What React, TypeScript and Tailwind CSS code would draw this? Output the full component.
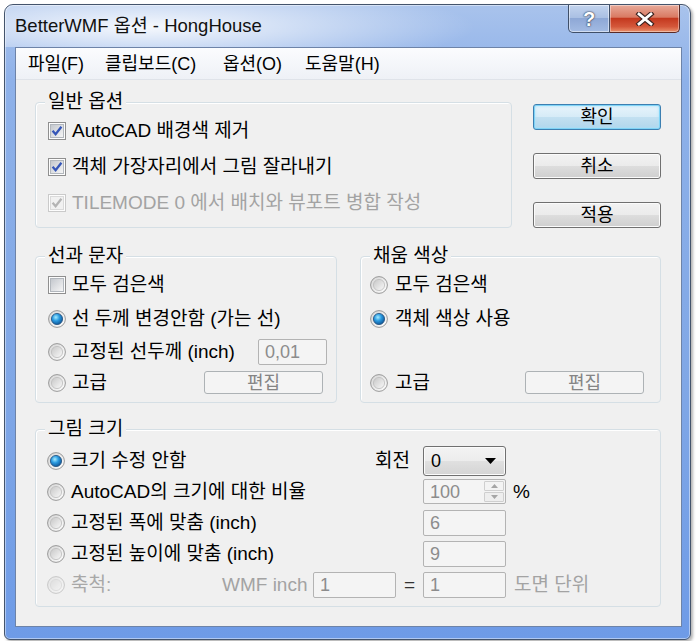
import React from "react";

function CheckBox({ checked = false, disabled = false }: { checked?: boolean; disabled?: boolean }) {
  return (
    <svg width="18" height="18" viewBox="0 0 18 18" className="shrink-0">
      <defs>
        <linearGradient id="cb-in" x1="0" y1="0" x2="1" y2="1">
          <stop offset="0" stopColor="#c2c6cc" />
          <stop offset="1" stopColor="#f7f7f7" />
        </linearGradient>
      </defs>
      <rect x="0.5" y="0.5" width="17" height="17" fill="#fdfdfd" stroke={disabled ? "#cacaca" : "#8f8f8f"} />
      <rect
        x="2.5"
        y="2.5"
        width="13"
        height="13"
        fill={disabled ? "#f1f1f1" : "url(#cb-in)"}
        stroke={disabled ? "#dadada" : "#b2b7bd"}
      />
      {checked && (
        <path
          d="M4.6 8.8 L7.6 12.2 L13.4 4.8"
          fill="none"
          stroke={disabled ? "#b4b4b4" : "#3556b8"}
          strokeWidth="2.3"
        />
      )}
    </svg>
  );
}

function Radio({ on = false, disabled = false }: { on?: boolean; disabled?: boolean }) {
  return (
    <svg width="18" height="18" viewBox="0 0 18 18" className={disabled ? "shrink-0 opacity-[0.45]" : "shrink-0"}>
      <defs>
        <linearGradient id="rd-out" x1="0" y1="0" x2="1" y2="1">
          <stop offset="0" stopColor="#d4d4d4" />
          <stop offset="1" stopColor="#ffffff" />
        </linearGradient>
        <linearGradient id="rd-in" x1="0" y1="0" x2="1" y2="1">
          <stop offset="0" stopColor="#c6c6c6" />
          <stop offset="1" stopColor="#fafafa" />
        </linearGradient>
        <radialGradient id="rd-on" cx="0.4" cy="0.35" r="0.7">
          <stop offset="0" stopColor="#a6ecff" />
          <stop offset="0.45" stopColor="#2a9ae0" />
          <stop offset="1" stopColor="#0c4e8e" />
        </radialGradient>
      </defs>
      <circle cx="9" cy="9" r="8.4" fill="url(#rd-out)" stroke="#8f8f8f" strokeWidth="0.9" />
      <circle
        cx="9"
        cy="9"
        r="5.6"
        fill={on ? "url(#rd-on)" : "url(#rd-in)"}
        stroke={on ? "#214f7e" : "#bcbcbc"}
        strokeWidth="0.8"
      />
    </svg>
  );
}

function Group({ title, className, children }: { title: string; className: string; children?: React.ReactNode }) {
  return (
    <fieldset className={"rounded-[4px] border border-[#d5dfe5] shadow-[inset_1px_1px_0_#ffffff] " + className}>
      <legend className="ml-[9px] bg-[#f0f0f0] px-[3px] text-[19px] leading-[20px]">{title}</legend>
      {children}
    </fieldset>
  );
}

function Field({ value, w, h = "h-[26px]" }: { value: string; w: string; h?: string }) {
  return (
    <div
      className={
        "flex items-center rounded-[2px] border border-[#b3b3b3] bg-[#f4f4f4] pl-[6px] text-[18px] text-[#8c8c8c] " +
        w +
        " " +
        h
      }
    >
      {value}
    </div>
  );
}

function Button({ label, kind = "normal" }: { label: string; kind?: "normal" | "default" | "off" }) {
  if (kind === "off") {
    return (
      <div className="flex h-[23px] w-[119px] items-center justify-center rounded-[3px] border border-[#adb2b5] bg-[#f4f4f4] text-[18px] text-[#858585]">
        {label}
      </div>
    );
  }
  if (kind === "default") {
    return (
      <div className="flex h-[26px] w-[128px] items-center justify-center rounded-[3px] border border-[#3c7fb1] bg-[linear-gradient(#e8f4fb_0%,#d6ebf7_50%,#c2e0f1_51%,#b1d6ec_100%)] text-[18px] shadow-[inset_0_0_0_1px_#7fd3f6,inset_0_0_3px_1px_#a8e2fa]">
        {label}
      </div>
    );
  }
  return (
    <div className="flex h-[26px] w-[128px] items-center justify-center rounded-[3px] border border-[#707070] bg-[linear-gradient(#f2f2f2_0%,#ebebeb_50%,#dddddd_51%,#cfcfcf_100%)] text-[18px] shadow-[inset_0_0_0_1px_#fbfbfb]">
      {label}
    </div>
  );
}

export default function App() {
  return (
    <div className="min-h-screen bg-white pl-[4px] pt-[4px] font-['Liberation_Sans','Noto_Sans_CJK_KR',sans-serif] text-[19px] leading-[22px] text-black">
      <div className="flex h-[636px] w-[687px] flex-col rounded-t-[9px] rounded-b-[6px] border border-[#44546c] bg-[linear-gradient(180deg,#a9c3ec_0%,#8eb1e9_12%,#80a7e6_60%,#6e9be7_100%)] shadow-[inset_0_0_0_1px_rgba(255,255,255,0.45),2px_2px_3px_rgba(0,0,0,0.3)]">
        {/* title bar */}
        <div className="flex h-[42px] justify-between rounded-t-[8px] bg-[radial-gradient(ellipse_330px_44px_at_140px_22px,rgba(255,255,255,0.9),rgba(255,255,255,0))] pl-[10px] pr-[10px]">
          <span className="mt-[10px] text-[18.5px] leading-[22px] text-[#111]">BetterWMF 옵션 - HongHouse</span>
          <div className="flex h-[28px]">
            <div className="flex w-[42px] items-center justify-center rounded-bl-[5px] border border-t-0 border-[#3f4f68] bg-[linear-gradient(#c3d4ee_0%,#a9bfe3_48%,#8ea8d6_50%,#a3bbe3_100%)] shadow-[inset_0_0_0_1px_rgba(255,255,255,0.5)]">
              <span className="text-[20px] font-bold text-white [text-shadow:0_0_2px_#1e2c44,0_0_1px_#1e2c44]">?</span>
            </div>
            <div className="flex w-[70px] items-center justify-center rounded-br-[5px] border border-l-0 border-t-0 border-[#5a2a26] bg-[linear-gradient(#e8aa9a_0%,#d97a62_45%,#c4391f_50%,#d4573a_80%,#e9906c_100%)] shadow-[inset_0_0_0_1px_rgba(255,255,255,0.4)]">
              <svg width="20" height="14" viewBox="0 0 20 14">
                <path d="M4 2 L16 12 M16 2 L4 12" stroke="#3a2220" strokeWidth="5" strokeLinecap="square" />
                <path d="M4 2 L16 12 M16 2 L4 12" stroke="#ffffff" strokeWidth="2.8" strokeLinecap="square" />
              </svg>
            </div>
          </div>
        </div>

        {/* client */}
        <div className="ml-[10px] mr-[8px] flex h-[580px] flex-col border border-[#6d83a8] bg-[#f0f0f0]">
          <div className="flex h-[32px] items-center border-b border-[#dfe3e9] bg-[linear-gradient(#fbfcfe,#eef1f6)] pl-[12px] text-[18px]">
            <span className="w-[77px]">파일(F)</span>
            <span className="w-[118px]">클립보드(C)</span>
            <span className="w-[82px]">옵션(O)</span>
            <span>도움말(H)</span>
          </div>

          <div className="flex flex-col pl-[19px] pr-[20px] pt-[12px]">
            {/* row 1 */}
            <div className="flex gap-[21px]">
              <Group title="일반 옵션" className="w-[477px]">
                <div className="pb-[6px] pl-[12px] pt-[1px]">
                  <div className="flex h-[36px] items-center gap-[6px]">
                    <CheckBox checked />
                    <span>AutoCAD 배경색 제거</span>
                  </div>
                  <div className="flex h-[36px] items-center gap-[6px]">
                    <CheckBox checked />
                    <span>객체 가장자리에서 그림 잘라내기</span>
                  </div>
                  <div className="flex h-[36px] items-center gap-[6px]">
                    <CheckBox checked disabled />
                    <span className="text-[#a3a3a3]">TILEMODE 0 에서 배치와 뷰포트 병합 작성</span>
                  </div>
                </div>
              </Group>
              <div className="flex flex-col gap-[23px] pt-[12px]">
                <Button label="확인" kind="default" />
                <Button label="취소" />
                <Button label="적용" />
              </div>
            </div>

            {/* row 2 */}
            <div className="mt-[18px] flex gap-[23px]">
              <Group title="선과 문자" className="w-[302px]">
                <div className="pb-[5px] pl-[12px] pt-[2px]">
                  <div className="flex h-[34px] items-center gap-[6px]">
                    <CheckBox />
                    <span>모두 검은색</span>
                  </div>
                  <div className="flex h-[34px] items-center gap-[6px]">
                    <Radio on />
                    <span>선 두께 변경안함 (가는 선)</span>
                  </div>
                  <div className="flex h-[32px] items-center">
                    <div className="flex w-[210px] items-center gap-[6px]">
                      <Radio />
                      <span>고정된 선두께 (inch)</span>
                    </div>
                    <Field value="0,01" w="w-[69px]" />
                  </div>
                  <div className="flex h-[29px] items-center">
                    <div className="flex w-[156px] items-center gap-[6px]">
                      <Radio />
                      <span>고급</span>
                    </div>
                    <Button label="편집" kind="off" />
                  </div>
                </div>
              </Group>
              <Group title="채움 색상" className="w-[301px]">
                <div className="pb-[5px] pl-[9px] pt-[2px]">
                  <div className="flex h-[34px] items-center gap-[7px]">
                    <Radio />
                    <span>모두 검은색</span>
                  </div>
                  <div className="flex h-[34px] items-center gap-[7px]">
                    <Radio on />
                    <span>객체 색상 사용</span>
                  </div>
                  <div className="h-[32px]" />
                  <div className="flex h-[29px] items-center">
                    <div className="flex w-[155px] items-center gap-[7px]">
                      <Radio />
                      <span>고급</span>
                    </div>
                    <Button label="편집" kind="off" />
                  </div>
                </div>
              </Group>
            </div>

            {/* row 3 */}
            <Group title="그림 크기" className="mt-[16px] w-[626px]">
              <div className="pb-[6px] pl-[11px] pt-[6px]">
                <div className="flex h-[31px] items-center">
                  <div className="flex w-[328px] items-center gap-[6px]">
                    <Radio on />
                    <span>크기 수정 안함</span>
                  </div>
                  <span className="w-[48px]">회전</span>
                  <div className="flex h-[30px] w-[83px] items-center justify-between rounded-[3px] border border-[#707070] bg-[linear-gradient(#f3f3f3_0%,#ececec_50%,#e0e0e0_51%,#d4d4d4_100%)] pl-[7px] pr-[9px] text-[18px] shadow-[inset_0_0_0_1px_#fbfbfb]">
                    <span>0</span>
                    <svg width="11" height="6" viewBox="0 0 11 6">
                      <path d="M0 0 H11 L5.5 6 Z" fill="#000" />
                    </svg>
                  </div>
                </div>
                <div className="flex h-[31px] items-center">
                  <div className="flex w-[376px] items-center gap-[6px]">
                    <Radio />
                    <span>AutoCAD의 크기에 대한 비율</span>
                  </div>
                  <div className="flex h-[25px] w-[83px] rounded-[2px] border border-[#b3b3b3] bg-[#f4f4f4]">
                    <span className="flex flex-1 items-center pl-[6px] text-[18px] text-[#8c8c8c]">100</span>
                    <div className="m-[1px] flex w-[20px] flex-col gap-[1px]">
                      <div className="flex flex-1 items-center justify-center rounded-[1px] border border-[#cfcfcf] bg-[#f3f3f3]">
                        <svg width="7" height="4" viewBox="0 0 7 4">
                          <path d="M0 4 L3.5 0 L7 4 Z" fill="#a5a5a5" />
                        </svg>
                      </div>
                      <div className="flex flex-1 items-center justify-center rounded-[1px] border border-[#cfcfcf] bg-[#eeeeee]">
                        <svg width="7" height="4" viewBox="0 0 7 4">
                          <path d="M0 0 L7 0 L3.5 4 Z" fill="#a5a5a5" />
                        </svg>
                      </div>
                    </div>
                  </div>
                  <span className="ml-[7px]">%</span>
                </div>
                <div className="flex h-[31px] items-center">
                  <div className="flex w-[376px] items-center gap-[6px]">
                    <Radio />
                    <span>고정된 폭에 맞춤 (inch)</span>
                  </div>
                  <Field value="6" w="w-[83px]" />
                </div>
                <div className="flex h-[31px] items-center">
                  <div className="flex w-[376px] items-center gap-[6px]">
                    <Radio />
                    <span>고정된 높이에 맞춤 (inch)</span>
                  </div>
                  <Field value="9" w="w-[83px]" />
                </div>
                <div className="flex h-[31px] items-center">
                  <div className="flex w-[175px] items-center gap-[6px]">
                    <Radio disabled />
                    <span className="text-[#a8a8a8]">축척:</span>
                  </div>
                  <span className="w-[91px] text-[#a3a3a3]">WMF inch</span>
                  <Field value="1" w="w-[83px]" />
                  <span className="w-[27px] pl-[8px] text-[#333]">=</span>
                  <Field value="1" w="w-[83px]" />
                  <span className="ml-[8px] text-[#a3a3a3]">도면 단위</span>
                </div>
              </div>
            </Group>
          </div>
        </div>
      </div>
    </div>
  );
}
